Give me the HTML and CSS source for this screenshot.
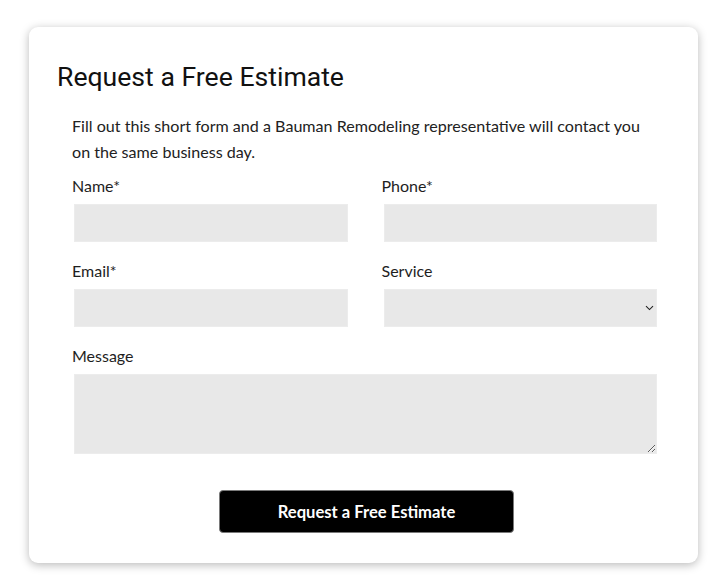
FILE: index.html
```html
<!DOCTYPE html>
<html lang="en">
<head>
<meta charset="utf-8">
<title>Request a Free Estimate</title>
<link rel="stylesheet" href="styles.css">
</head>
<body>
<div class="card">
  <h1 class="title">Request a Free Estimate</h1>
  <div class="form-body">
    <p class="intro">Fill out this short form and a Bauman Remodeling representative will contact you on the same business day.</p>
    <form class="grid">
      <div class="field">
        <label class="label" for="name">Name*</label>
        <input class="input" id="name" type="text">
      </div>
      <div class="field">
        <label class="label" for="phone">Phone*</label>
        <input class="input" id="phone" type="tel">
      </div>
      <div class="field">
        <label class="label" for="email">Email*</label>
        <input class="input" id="email" type="email">
      </div>
      <div class="field">
        <label class="label" for="service">Service</label>
        <div class="select-wrap">
          <select class="input select" id="service">
            <option></option>
          </select>
          <svg class="chevron" width="9" height="6" viewBox="0 0 9 6" aria-hidden="true">
            <path d="M1 1.2 L4.5 4.6 L8 1.2" fill="none" stroke="#222" stroke-width="1.1"/>
          </svg>
        </div>
      </div>
      <div class="field wide">
        <label class="label" for="message">Message</label>
        <textarea class="input textarea" id="message"></textarea>
      </div>
      <div class="actions wide">
        <button class="btn" type="button">Request a Free Estimate</button>
      </div>
    </form>
  </div>
</div>
</body>
</html>
```
FILE: styles.css
```css
* { box-sizing: border-box; }

html, body {
  min-height: 588px;
}

body {
  margin: 0;
  padding: 27px 0 25px 29px;
  background: #ffffff;
  font-family: Lato, "Liberation Sans", sans-serif;
  color: #1e1e1e;
}

.card {
  width: 669px;
  padding: 34px 41px 30px 28px;
  background: #ffffff;
  border-radius: 9px;
  box-shadow: 0 2px 10px rgba(0, 0, 0, 0.28);
}

.title {
  margin: 0 0 20px 0;
  font-family: Roboto, "Liberation Sans", sans-serif;
  font-weight: 400;
  font-size: 26.6px;
  line-height: 32px;
  color: #111111;
}

.form-body {
  margin-left: 15px;
}

.intro {
  margin: 0 0 9px 0;
  font-size: 16.1px;
  line-height: 26px;
  color: #222222;
}

.grid {
  display: grid;
  grid-template-columns: 1fr 1fr;
  column-gap: 34px;
  row-gap: 17px;
  margin: 0;
}

.field {
  display: flex;
  flex-direction: column;
}

.wide {
  grid-column: 1 / -1;
}

.label {
  font-size: 16px;
  line-height: 24px;
  margin-bottom: 6px;
  color: #1e1e1e;
}

.input {
  display: block;
  width: calc(100% - 2px);
  margin: 0 0 0 2px;
  height: 38px;
  border: 1px solid #ececec;
  background: #e8e8e8;
  border-radius: 0;
  font: inherit;
  outline: none;
}

.select-wrap {
  position: relative;
}

.select {
  appearance: none;
  -webkit-appearance: none;
}

.chevron {
  position: absolute;
  right: 3px;
  top: 16px;
}

.textarea {
  height: 80px;
  resize: vertical;
}

.actions {
  display: flex;
  justify-content: center;
  padding-left: 4px;
  margin-top: 19px;
}

.btn {
  width: 295px;
  height: 43px;
  background: #000000;
  color: #ffffff;
  border: 1px solid #7a7a7a;
  border-radius: 4px;
  font-family: Lato, "Liberation Sans", sans-serif;
  font-weight: 700;
  font-size: 16.6px;
}
```
